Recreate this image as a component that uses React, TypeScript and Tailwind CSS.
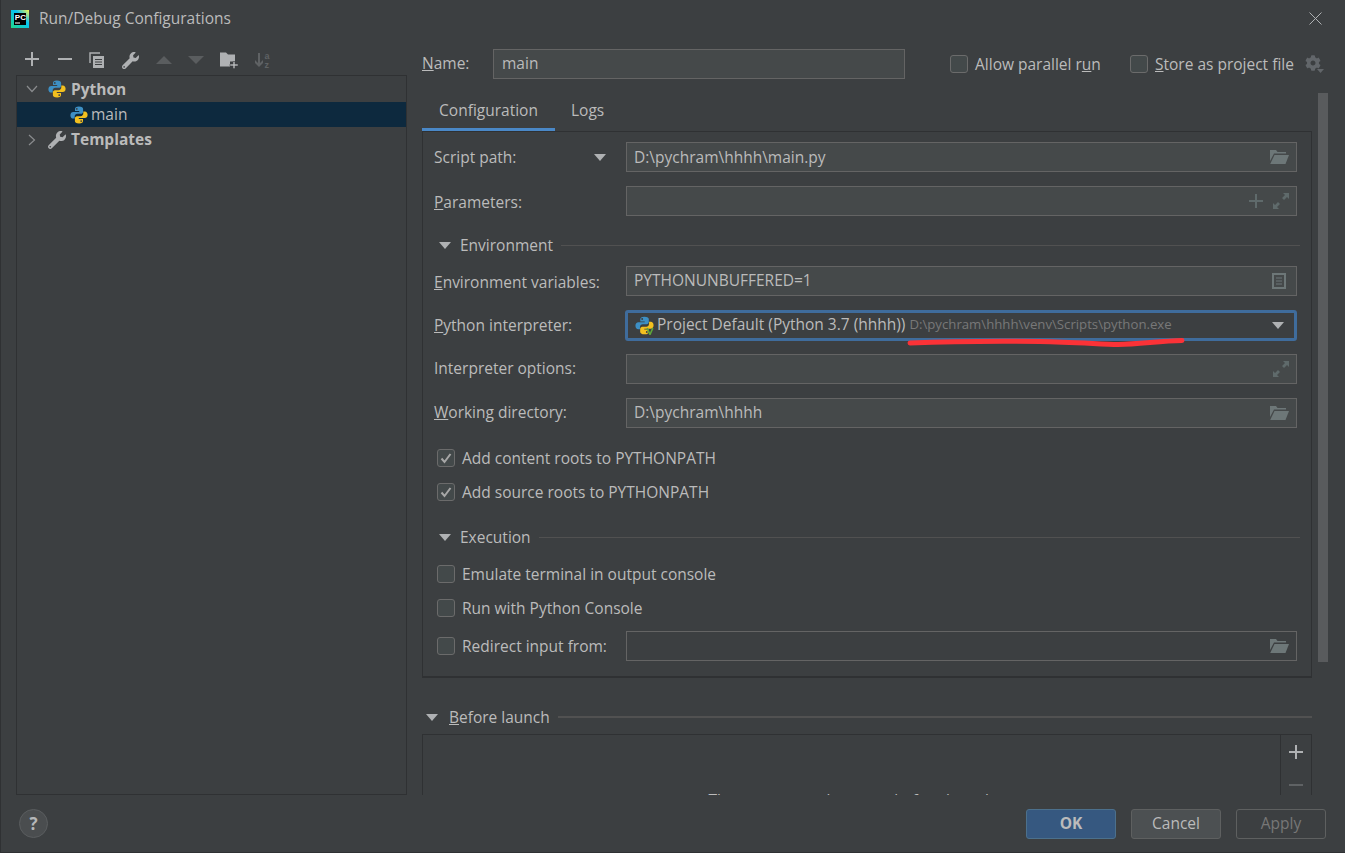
import React from "react";
import { FaWrench, FaCog } from "react-icons/fa";

function Py({ size = 18, v = false }: { size?: number; v?: boolean }) {
  return (
    <svg width={size} height={size} viewBox="0 0 18 18" className="shrink-0">
      <path fill="#3d8fc4" d="M8.9 .6C5.9 .6 5 1.8 5 3.1V5.1H9.2V5.9H3.2C1.6 5.9 .4 7.1 .4 9.2S1.6 12.6 3 12.6H4.7V10.4C4.7 8.9 5.9 7.8 7.3 7.8H11C12.2 7.8 13.1 6.8 13.1 5.7V3.1C13.1 1.7 11.9 .6 8.9 .6Z" />
      <circle cx="6.8" cy="2.9" r=".9" fill="#3c3f41" />
      <path fill="#f2c01f" d="M9.1 17.4C12.1 17.4 13 16.2 13 14.9V12.9H8.8V12.1H14.8C16.4 12.1 17.6 10.9 17.6 8.8S16.4 5.4 15 5.4H13.3V7.6C13.3 9.1 12.1 10.2 10.7 10.2H7C5.8 10.2 4.9 11.2 4.9 12.3V14.9C4.9 16.3 6.1 17.4 9.1 17.4Z" />
      <circle cx="11.2" cy="15.1" r=".9" fill="#3c3f41" />
      {v && <path d="M11.5 11.5L14.2 17.5L16.9 11.5" fill="none" stroke="#5fa83a" strokeWidth="1.5" />}
    </svg>
  );
}

function FolderOpen() {
  return (
    <svg width="20" height="16" viewBox="0 0 20 16" className="shrink-0">
      <path fill="#6d7778" d="M1 1H7L8.5 3H17V4.5H5L1 12Z" />
      <path fill="#6d7778" d="M5.500 6H20L16.500 15H1.200Z" />
    </svg>
  );
}

function Expand() {
  return (
    <svg width="16" height="16" viewBox="0 0 16 16" className="shrink-0">
      <path fill="#5f6a6b" d="M10 0H16V6L14 4L11 7L9 5L12 2Z" />
      <path fill="#5f6a6b" d="M6 16H0V10L2 12L5 9L7 11L4 14Z" />
    </svg>
  );
}

function Plus({ color = "#afb1b3" }: { color?: string }) {
  return (
    <svg width="14" height="14" viewBox="0 0 14 14" className="shrink-0">
      <path fill={color} d="M6 0H8V6H14V8H8V14H6V8H0V6H6Z" />
    </svg>
  );
}

function Minus({ color = "#afb1b3" }: { color?: string }) {
  return (
    <svg width="14" height="14" viewBox="0 0 14 14" className="shrink-0">
      <path fill={color} d="M0 6H14V8H0Z" />
    </svg>
  );
}

function Arrow({ color = "#afb1b3" }: { color?: string }) {
  return (
    <svg width="12" height="7" viewBox="0 0 12 7" className="shrink-0">
      <path fill={color} d="M0 0H12L6 7Z" />
    </svg>
  );
}

function Input({ children, icon, bare = false, textPt = "" }: { children?: React.ReactNode; icon?: React.ReactNode; bare?: boolean; textPt?: string }) {
  return (
    <div className={`w-[671px] h-[30px] border border-[#646464] ${bare ? "bg-[#3c3f41]" : "bg-[#45494a]"} flex items-center justify-between pl-[7px] pr-[7px]`}>
      <span className={textPt}>{children}</span>
      <div className="flex items-center gap-[10px]">{icon}</div>
    </div>
  );
}

function Row({ label, children, mb = true, labelPt = "" }: { label: React.ReactNode; children: React.ReactNode; mb?: boolean; labelPt?: string }) {
  return (
    <div className={`flex items-center h-[30px] ${mb ? "mb-[14px]" : ""}`}>
      <div className={`w-[203px] pl-[11px] shrink-0 whitespace-nowrap ${labelPt}`}>{label}</div>
      {children}
    </div>
  );
}

function Check({ checked = false }: { checked?: boolean }) {
  return (
    <div className="w-[18px] h-[18px] rounded-[3px] border border-[#6b6b6b] bg-[#43494a] flex items-center justify-center shrink-0">
      {checked && (
        <svg width="12" height="12" viewBox="0 0 12 12">
          <path d="M1.500 6.500L4.500 10L10.500 2" fill="none" stroke="#a7a7a7" strokeWidth="2" />
        </svg>
      )}
    </div>
  );
}

function CheckRow({ label, checked }: { label: string; checked?: boolean }) {
  return (
    <div className="flex items-center h-[34px] pl-[14px] gap-[7px]">
      <Check checked={checked} />
      <span className="pt-[1px] whitespace-nowrap">{label}</span>
    </div>
  );
}

function Section({ label, h, top }: { label: string; h: string; top: string }) {
  return (
    <div className={`flex items-center gap-[8px] pl-[16px] pr-[11px] ${h} ${top}`}>
      <Arrow />
      <span className="ml-[1px] pt-[2px]">{label}</span>
      <div className="flex-1 h-px bg-[#515151]" />
    </div>
  );
}

export default function App() {
  return (
    <div className="w-[1345px] h-[853px] bg-[#3c3f41] text-[#bbbbbb] font-['Open_Sans','Noto_Sans',sans-serif] text-[15.5px] flex flex-col overflow-hidden border-l border-b border-[#2f3133]">
      <div className="h-[37px] shrink-0 flex items-center justify-between pl-[10px] pr-[23px]">
        <div className="flex items-center gap-[10px]">
          <svg width="18" height="18" viewBox="0 0 18 18">
            <defs>
              <linearGradient id="pc" x1="0" y1="1" x2="1" y2="0">
                <stop offset="0" stopColor="#21d789" />
                <stop offset="0.6" stopColor="#07c3f2" />
                <stop offset="1" stopColor="#fcf84a" />
              </linearGradient>
            </defs>
            <rect width="18" height="18" fill="url(#pc)" />
            <rect x="3" y="3" width="12" height="12" fill="#000" />
            <text x="3.800" y="9.800" fontSize="8" fontWeight="700" fill="#fff" fontFamily="Liberation Sans">PC</text>
            <rect x="4" y="12.500" width="5" height="1" fill="#fff" />
          </svg>
          <span className="pt-[1px]">Run/Debug Configurations</span>
        </div>
        <svg width="13" height="13" viewBox="0 0 13 13">
          <path d="M.5 .5L12.500 12.500M12.500 .5L.5 12.500" stroke="#afb1b3" strokeWidth="1" fill="none" />
        </svg>
      </div>

      <div className="h-[758px] shrink-0 flex pl-[15px]">
        <div className="w-[391px] shrink-0 flex flex-col">
          <div className="h-[38px] shrink-0 pt-[15px] pl-[8px] flex items-start gap-[16.7px]">
            <div className="w-[16px] flex justify-center"><Plus /></div>
            <div className="w-[16px] flex justify-center"><Minus /></div>
            <svg width="16" height="16" viewBox="0 0 16 16" className="shrink-0">
              <path fill="none" stroke="#afb1b3" strokeWidth="1.400" d="M1 11V1H11" />
              <rect x="4" y="4" width="11" height="12" fill="#afb1b3" />
              <path stroke="#3c3f41" strokeWidth="1" d="M6 7.500H13M6 10H13M6 12.500H13" />
            </svg>
            <FaWrench size={17} color="#afb1b3" />
            <div className="w-[16px] h-[16px] flex items-center justify-center"><svg width="16" height="8" viewBox="0 0 16 8"><path fill="#5a5d5f" d="M0 8L8 0L16 8Z" /></svg></div>
            <div className="w-[16px] h-[16px] flex items-center justify-center"><svg width="16" height="8" viewBox="0 0 16 8"><path fill="#5a5d5f" d="M0 0H16L8 8Z" /></svg></div>
            <svg width="18" height="17" viewBox="0 0 18 16" className="shrink-0 -ml-[1px]">
              <path fill="#afb1b3" d="M0 0H6L8 2H15V9H10V14H0Z" />
              <path fill="#afb1b3" d="M13 9H15V11.500H18V13.500H15V16H13V13.500H10V11.500H13Z" stroke="#3c3f41" strokeWidth=".5" />
            </svg>
            <svg width="18" height="18" viewBox="0 0 18 18" className="shrink-0 -ml-[1px] -mt-[1px]">
              <path fill="#5f6264" d="M4 2H6V12L9 9V12L5 16L1 12V9L4 12Z" />
              <text x="10.500" y="7.500" fontSize="9" fontWeight="700" fill="#5f6264" fontFamily="Liberation Sans">a</text>
              <text x="10.500" y="16.500" fontSize="9" fontWeight="700" fill="#5f6264" fontFamily="Liberation Sans">z</text>
            </svg>
          </div>
          <div className="h-[720px] border border-[#2f3133]">
            <div className="h-[26px] flex items-center">
              <svg width="12" height="8" viewBox="0 0 12 8" className="ml-[9px] mr-[10px] shrink-0"><path d="M1 1L6 6.500L11 1" fill="none" stroke="#8a8c8e" strokeWidth="1.200" /></svg>
              <Py />
              <span className="ml-[5px] font-bold pt-[1px]">Python</span>
            </div>
            <div className="h-[25px] flex items-center bg-[#0d293e] pl-[53px]">
              <Py />
              <span className="ml-[3px] pt-[1px]">main</span>
            </div>
            <div className="h-[25px] flex items-center">
              <svg width="8" height="12" viewBox="0 0 8 12" className="ml-[11px] mr-[12px] shrink-0"><path d="M1 1L6.500 6L1 11" fill="none" stroke="#8a8c8e" strokeWidth="1.200" /></svg>
              <FaWrench size={18} color="#afb1b3" />
              <span className="ml-[5px] font-bold">Templates</span>
            </div>
          </div>
        </div>

        <div className="w-[906px] ml-[15px] shrink-0 flex flex-col">
          <div className="h-[30px] mt-[12px] shrink-0 flex items-center">
            <span className="w-[71px] shrink-0"><u>N</u>ame:</span>
            <div className="w-[412px] h-[30px] border border-[#646464] bg-[#45494a] flex items-center pl-[8px] shrink-0">main</div>
            <div className="ml-[45px] flex items-center gap-[7px] w-[180px] shrink-0">
              <Check />
              <span className="whitespace-nowrap pt-[1px]">Allow parallel r<u>u</u>n</span>
            </div>
            <div className="flex items-center gap-[7px] shrink-0">
              <Check />
              <span className="whitespace-nowrap pt-[1px]"><u>S</u>tore as project file</span>
            </div>
            <div className="relative ml-[11px] w-[18px] h-[18px] shrink-0">
              <FaCog size={16} color="#62666a" />
              <div className="absolute right-[-1px] bottom-[0px]"><svg width="7" height="4" viewBox="0 0 7 4"><path fill="#62666a" d="M0 0H7L3.500 4Z" /></svg></div>
            </div>
          </div>

          <div className="mt-[14px] flex gap-[6px] h-[702px] overflow-hidden">
            <div className="w-[890px] shrink-0">
              <div className="h-[38px] flex items-stretch">
                <div className="w-[133px] border-b-[3px] border-[#4a88c7] flex items-center justify-center pt-[1px]">Configuration</div>
                <div className="ml-[16px] flex items-center pb-[2px]">Logs</div>
              </div>
              <div className="border border-[#2f3133] border-b-2 h-[547px] pt-[10px]">
                <Row label="Script path:" labelPt="pt-[2px]">
                  <div className="flex items-center -ml-[32px] mr-[20px]"><Arrow /></div>
                  <Input textPt="pt-[1px]" icon={<FolderOpen />}>{"D:\\pychram\\hhhh\\main.py"}</Input>
                </Row>
                <Row label={<><u>P</u>arameters:</>} mb={false} labelPt="pt-[3px]">
                  <Input icon={<><Plus color="#5f6a6b" /><Expand /></>} />
                </Row>
                <Section label="Environment" h="h-[50px]" top="pt-[8px]" />
                <Row label={<><u>E</u>nvironment variables:</>} labelPt="pt-[3px]">
                  <Input icon={
                    <svg width="14" height="16" viewBox="0 0 14 16" className="mr-[3px]">
                      <rect x="1" y="1" width="12" height="14" fill="none" stroke="#6d7778" strokeWidth="2" />
                      <path d="M4 5H10M4 8H10M4 11H10" stroke="#6d7778" strokeWidth="1" />
                    </svg>
                  }>PYTHONUNBUFFERED=1</Input>
                </Row>
                <Row label={<><u>P</u>ython interpreter:</>} labelPt="pt-[1px]">
                  <div className="w-[672px] h-[31px] -ml-[1px] rounded-[3px] border-[3px] border-[#3f6c9c] flex items-center pl-[7px] pr-[10px] shrink-0">
                    <Py v size={19} />
                    <span className="ml-[3px] whitespace-nowrap">Project Default (Python 3.7 (hhhh))</span>
                    <span className="ml-[4px] text-[13.2px] text-[#787878] whitespace-nowrap">{"D:\\pychram\\hhhh\\venv\\Scripts\\python.exe"}</span>
                    <div className="ml-auto"><Arrow /></div>
                  </div>
                </Row>
                <Row label="Interpreter options:">
                  <Input icon={<Expand />} />
                </Row>
                <Row label={<><u>W</u>orking directory:</>} mb={false}>
                  <Input icon={<FolderOpen />}>{"D:\\pychram\\hhhh"}</Input>
                </Row>
                <div className="mt-[13px]">
                  <CheckRow checked label="Add content roots to PYTHONPATH" />
                  <CheckRow checked label="Add source roots to PYTHONPATH" />
                </div>
                <Section label="Execution" h="h-[48px]" top="pt-[8px]" />
                <CheckRow label="Emulate terminal in output console" />
                <CheckRow label="Run with Python Console" />
                <div className="flex items-center h-[30px] mt-[6px] pl-[14px]">
                  <Check />
                  <span className="ml-[7px] pt-[2px] w-[164px] whitespace-nowrap">Redirect input from:</span>
                  <Input bare icon={<FolderOpen />} />
                </div>
              </div>
              <div className="h-[56px] flex items-center gap-[8px] pl-[4px] pt-[22px]">
                <Arrow />
                <span className="ml-[3px] pt-[2px]"><u>B</u>efore launch</span>
                <div className="flex-1 h-[2px] bg-[#515151]" />
              </div>
              <div className="h-[100px] border border-[#2f3133] flex">
                <div className="flex-1 flex justify-center pt-[54px] text-[#bbbbbb] whitespace-nowrap">There are no tasks to run before launch</div>
                <div className="w-[31px] border-l border-[#2f3133] flex flex-col items-center pt-[10px] gap-[19px]">
                  <Plus />
                  <Minus color="#5f6264" />
                </div>
              </div>
            </div>
            <div className="w-[10px] h-[569px] bg-[#595b5d] shrink-0" />
          </div>
        </div>
      </div>

      <div className="flex-1 flex items-center pl-[18px] pr-[19px]">
        <div className="w-[29px] h-[29px] rounded-full bg-[#4a4d4f] border border-[#5a5d5f] flex items-center justify-center font-bold text-[17px] text-[#b5b7b9]">?</div>
        <div className="ml-auto flex gap-[15px]">
          <div className="w-[90px] h-[30px] rounded-[3px] bg-[#365880] border border-[#4c708c] flex items-center justify-center font-bold pt-[1px]">OK</div>
          <div className="w-[90px] h-[30px] rounded-[3px] bg-[#4c5052] border border-[#5e6060] flex items-center justify-center pt-[1px]">Cancel</div>
          <div className="w-[90px] h-[30px] rounded-[3px] border border-[#5e6060] flex items-center justify-center text-[#777777] pt-[1px]">Apply</div>
        </div>
      </div>

      <svg width="290" height="20" viewBox="0 0 290 20" className="absolute left-[900px] top-[332px] pointer-events-none">
        <path d="M10 11C60 9 100 9 140 9.500C170 10 200 12 218 12.500C240 12 260 9 282 8.500" fill="none" stroke="#fb3237" strokeWidth="5" strokeLinecap="round" />
      </svg>
    </div>
  );
}
